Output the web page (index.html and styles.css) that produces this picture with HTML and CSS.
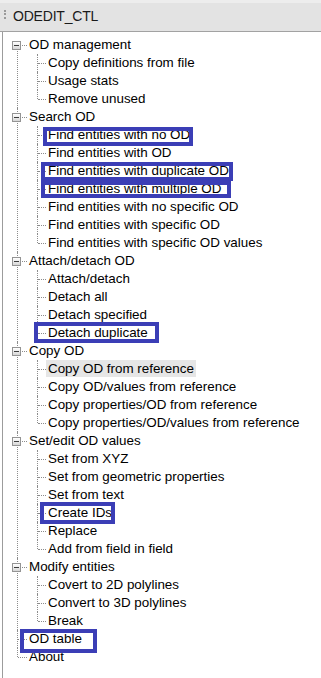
FILE: index.html
```html
<!DOCTYPE html>
<html>
<head>
<meta charset="utf-8">
<link rel="stylesheet" href="styles.css">
</head>
<body>
<div class="page">
  <div class="header">
    <span class="grip"></span>
    <span class="title">ODEDIT_CTL</span>
  </div>
  <div class="panel">
    <ul class="tree">
      <li class="node">
        <div class="row"><span class="exp"></span><span class="label">OD management</span></div>
        <ul class="kids">
          <li><div class="row"><span class="label">Copy definitions from file</span></div></li>
          <li><div class="row"><span class="label">Usage stats</span></div></li>
          <li><div class="row"><span class="label">Remove unused</span></div></li>
        </ul>
      </li>
      <li class="node">
        <div class="row"><span class="exp"></span><span class="label">Search OD</span></div>
        <ul class="kids">
          <li><div class="row"><span class="label">Find entities with no OD</span></div></li>
          <li><div class="row"><span class="label">Find entities with OD</span></div></li>
          <li><div class="row"><span class="label">Find entities with duplicate OD</span></div></li>
          <li><div class="row"><span class="label">Find entities with multiple OD</span></div></li>
          <li><div class="row"><span class="label">Find entities with no specific OD</span></div></li>
          <li><div class="row"><span class="label">Find entities with specific OD</span></div></li>
          <li><div class="row"><span class="label">Find entities with specific OD values</span></div></li>
        </ul>
      </li>
      <li class="node">
        <div class="row"><span class="exp"></span><span class="label">Attach/detach OD</span></div>
        <ul class="kids">
          <li><div class="row"><span class="label">Attach/detach</span></div></li>
          <li><div class="row"><span class="label">Detach all</span></div></li>
          <li><div class="row"><span class="label">Detach specified</span></div></li>
          <li><div class="row"><span class="label">Detach duplicate</span></div></li>
        </ul>
      </li>
      <li class="node">
        <div class="row"><span class="exp"></span><span class="label">Copy OD</span></div>
        <ul class="kids">
          <li><div class="row"><span class="label sel">Copy OD from reference</span></div></li>
          <li><div class="row"><span class="label">Copy OD/values from reference</span></div></li>
          <li><div class="row"><span class="label">Copy properties/OD from reference</span></div></li>
          <li><div class="row"><span class="label">Copy properties/OD/values from reference</span></div></li>
        </ul>
      </li>
      <li class="node">
        <div class="row"><span class="exp"></span><span class="label">Set/edit OD values</span></div>
        <ul class="kids">
          <li><div class="row"><span class="label">Set from XYZ</span></div></li>
          <li><div class="row"><span class="label">Set from geometric properties</span></div></li>
          <li><div class="row"><span class="label">Set from text</span></div></li>
          <li><div class="row"><span class="label">Create IDs</span></div></li>
          <li><div class="row"><span class="label">Replace</span></div></li>
          <li><div class="row"><span class="label">Add from field in field</span></div></li>
        </ul>
      </li>
      <li class="node">
        <div class="row"><span class="exp"></span><span class="label">Modify entities</span></div>
        <ul class="kids">
          <li><div class="row"><span class="label">Covert to 2D polylines</span></div></li>
          <li><div class="row"><span class="label">Convert to 3D polylines</span></div></li>
          <li><div class="row"><span class="label">Break</span></div></li>
        </ul>
      </li>
      <li><div class="row"><span class="label">OD table</span></div></li>
      <li><div class="row"><span class="label">About</span></div></li>
    </ul>
  </div>
  <div class="mark m1"></div>
  <div class="mark m2"></div>
  <div class="mark m3"></div>
  <div class="mark m4"></div>
  <div class="mark m5"></div>
  <div class="mark m6"></div>
</div>
</body>
</html>
```
FILE: styles.css
```css
html, body {
  margin: 0;
  padding: 0;
  background: #ffffff;
}
.page {
  position: relative;
  width: 321px;
  height: 678px;
  overflow: hidden;
  font-family: "Liberation Sans", Arial, sans-serif;
  font-size: 13.4px;
  color: #000;
}
.header {
  height: 32px;
  box-sizing: border-box;
  background: linear-gradient(#ededed 0, #ededed 3px, #e3e3e3 3px, #e3e3e3 100%);
  border-bottom: 1px solid #a2a2a2;
  display: flex;
  align-items: center;
  padding-left: 4px;
}
.grip {
  width: 0;
  height: 9px;
  border-left: 2px dotted #9a9a9a;
  margin-top: -3px;
}
.title {
  margin-left: 7px;
  font-size: 14px;
  color: #1a1a1a;
  letter-spacing: -0.2px;
}
.panel {
  margin-left: 2px;
  border-left: 1px solid #9c9c9c;
  height: 646px;
  padding-top: 4px;
  box-sizing: border-box;
}
.tree, .kids {
  list-style: none;
  margin: 0;
  padding: 0;
}
.tree > li {
  position: relative;
  padding-left: 24px;
}
.tree > li::before {
  content: "";
  position: absolute;
  left: 14px;
  top: 0;
  bottom: 0;
  border-left: 1px dotted #8c8c8c;
}
.tree > li:first-child::before {
  top: 9px;
}
.tree > li:last-child::before {
  bottom: auto;
  height: 9px;
}
.tree > li::after {
  content: "";
  position: absolute;
  left: 15px;
  top: 9px;
  width: 9px;
  border-top: 1px dotted #8c8c8c;
}
.kids > li {
  position: relative;
  padding-left: 19px;
}
.kids > li::before {
  content: "";
  position: absolute;
  left: 10px;
  top: 0;
  bottom: 0;
  border-left: 1px dotted #8c8c8c;
}
.kids > li:last-child::before {
  bottom: auto;
  height: 9px;
}
.kids > li::after {
  content: "";
  position: absolute;
  left: 11px;
  top: 9px;
  width: 8px;
  border-top: 1px dotted #8c8c8c;
}
.row {
  height: 18px;
  line-height: 18px;
  white-space: nowrap;
}
.label {
  display: inline-block;
  padding: 0 2px;
  height: 17px;
  line-height: 18px;
}
.label.sel {
  background: #e6e6e6;
}
.exp {
  position: absolute;
  left: 9px;
  top: 5px;
  width: 9px;
  height: 9px;
  box-sizing: border-box;
  border: 1px solid #949494;
  background: linear-gradient(#ffffff, #d6d6d6);
  z-index: 1;
}
.exp::after {
  content: "";
  position: absolute;
  left: 1px;
  top: 3px;
  width: 5px;
  height: 1px;
  background: #3c3c3c;
}
.mark {
  position: absolute;
  box-sizing: border-box;
  border: 4px solid #3b3eb6;
}
.m1 { left: 43px; top: 127px; width: 150px; height: 19px; }
.m2 { left: 41px; top: 162px; width: 192px; height: 19px; }
.m3 { left: 41px; top: 181px; width: 190px; height: 17px; }
.m4 { left: 34px; top: 322px; width: 125px; height: 21px; }
.m5 { left: 40px; top: 502px; width: 75px; height: 22px; }
.m6 { left: 20px; top: 629px; width: 77px; height: 24px; }
```
